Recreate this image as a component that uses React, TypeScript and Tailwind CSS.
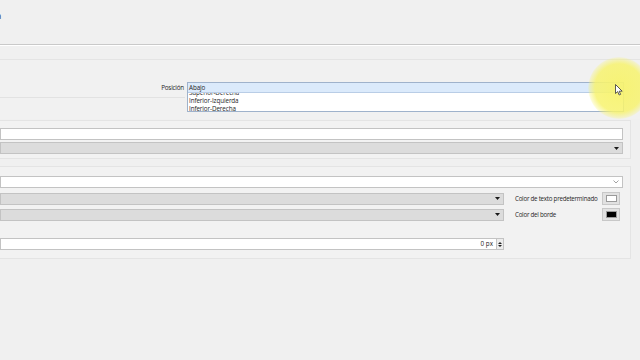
import React from "react";

const F = { fontFamily: '"Open Sans", "Noto Sans", "DejaVu Sans", sans-serif' };

function SelectArrow() {
  return (
    <svg width="5" height="3" viewBox="0 0 5 3" className="shrink-0">
      <path d="M0 0H5L2.5 3Z" fill="#1a1a1a" />
    </svg>
  );
}

function Chevron() {
  return (
    <svg width="6" height="4" viewBox="0 0 6 4" className="shrink-0">
      <path d="M0.5 0.5L3 3L5.5 0.5" fill="none" stroke="#8a8a8a" strokeWidth="0.8" />
    </svg>
  );
}

function GraySelect({ className = "" }: { className?: string }) {
  return (
    <div className={`h-[12px] bg-[#dcdcdc] border border-[#c3c3c3] flex items-center justify-end pr-[3px] ${className}`}>
      <SelectArrow />
    </div>
  );
}

function Swatch({ color }: { color: string }) {
  return (
    <div className="w-[18px] h-[13px] mr-[3px] shrink-0 bg-[#e1e1e1] border border-[#c8c8c8] flex items-center justify-center">
      <div className="w-[11px] h-[7px] border border-[#9a9a9a]" style={{ background: color }} />
    </div>
  );
}

export default function App() {
  return (
    <div className="w-[640px] h-[360px] bg-[#f0f0f0] overflow-hidden relative text-[#262626]" style={F}>
      {/* header */}
      <div className="h-[44px] pt-[11px] overflow-hidden">
        <span className="block whitespace-nowrap ml-[-34px] text-[9px] leading-[10px] text-[#333]">Leyenda</span>
      </div>
      <div className="h-px bg-[#c9c9c9]" />
      <div className="h-px bg-white" />
      <div className="h-[13px]" />

      {/* panel 1 */}
      <div className="h-[60px] border-t border-[#e4e4e4] bg-[#f1f1f1] flex flex-col">
        <div className="h-[22px]" />
        <div className="flex items-start">
          <div className="w-[185px] flex flex-col">
            <div className="flex justify-end pr-[1px] h-[12px] items-center">
              <span className="text-[6.3px] tracking-[-0.2px] leading-[8px]">Posición</span>
            </div>
            <div className="h-[3px]" />
            <div className="h-px bg-[#e2e2e2]" />
          </div>
          <div className="ml-[2px] w-[437px] h-[30px] border border-[#9fb2cb] bg-white flex flex-col overflow-hidden">
            <div className="h-[10px] shrink-0 bg-[#dbeafb] border-b border-[#b9cde6] flex items-center pl-[1px]">
              <span className="text-[6.3px] tracking-[-0.1px] leading-[8px]">Abajo</span>
            </div>
            <div className="h-[4px] shrink-0 overflow-hidden pl-[1px]">
              <span className="block mt-[-4px] text-[6.3px] tracking-[-0.1px] leading-[8px]">Superior-Derecha</span>
            </div>
            <div className="h-[8px] shrink-0 flex items-center pl-[1px]">
              <span className="text-[6.3px] tracking-[-0.1px] leading-[8px]">Inferior-Izquierda</span>
            </div>
            <div className="h-[8px] shrink-0 flex items-center pl-[1px]">
              <span className="text-[6.3px] tracking-[-0.1px] leading-[8px]">Inferior-Derecha</span>
            </div>
          </div>
        </div>
      </div>

      <div className="h-px" />

      {/* panel 2 */}
      <div className="h-[39px] w-[631px] border-t border-b border-r border-[#e4e4e4] bg-[#f2f2f2] flex flex-col pt-[7px] pr-[7px] gap-[2px]">
        <div className="h-[12px] bg-white border border-[#c3c3c3]" />
        <GraySelect />
      </div>

      <div className="h-[7px]" />

      {/* panel 3 */}
      <div className="h-[93px] w-[631px] border-t border-b border-r border-[#e4e4e4] bg-[#f2f2f2] flex flex-col pt-[9px] pr-[7px]">
        <div className="h-[12px] bg-white border border-[#c3c3c3] flex items-center justify-end pr-[3px]">
          <Chevron />
        </div>
        <div className="h-[4px]" />
        <div className="flex items-center">
          <GraySelect className="w-[504px] shrink-0" />
          <span className="ml-[11px] whitespace-nowrap text-[6.2px] tracking-[-0.25px] leading-[8px] flex-1">Color de texto predeterminado</span>
          <Swatch color="#ffffff" />
        </div>
        <div className="h-[3px]" />
        <div className="flex items-center">
          <GraySelect className="w-[504px] shrink-0" />
          <span className="ml-[11px] whitespace-nowrap text-[6.2px] tracking-[-0.25px] leading-[8px] flex-1">Color del borde</span>
          <Swatch color="#000000" />
        </div>
        <div className="h-[17px]" />
        <div className="w-[504px] h-[12px] bg-white border border-[#c3c3c3] flex items-center justify-end">
          <span className="text-[6.3px] leading-[8px] mr-[3px]">0 px</span>
          <div className="w-[7px] h-[10px] border-l border-[#c3c3c3] bg-[#ececec] flex flex-col items-center justify-center gap-[1px]">
            <svg width="4" height="2" viewBox="0 0 4 2"><path d="M0 2H4L2 0Z" fill="#222" /></svg>
            <svg width="4" height="2" viewBox="0 0 4 2"><path d="M0 0H4L2 2Z" fill="#222" /></svg>
          </div>
        </div>
      </div>

      {/* cursor highlight */}
      <div className="absolute left-[588px] top-[57px] w-[62px] h-[62px] rounded-full bg-[radial-gradient(circle,rgba(247,243,110,0.95)_0%,rgba(247,243,110,0.85)_55%,rgba(247,243,110,0.3)_68%,rgba(247,243,110,0)_72%)]" />
      <svg className="absolute left-[615px] top-[84px]" width="8" height="12" viewBox="0 0 8 12">
        <path d="M0.5 0.5V9.5L2.7 7.6L4.2 11L5.6 10.4L4.2 7.2H7.2Z" fill="#fff" stroke="#333" strokeWidth="0.8" />
      </svg>
    </div>
  );
}
